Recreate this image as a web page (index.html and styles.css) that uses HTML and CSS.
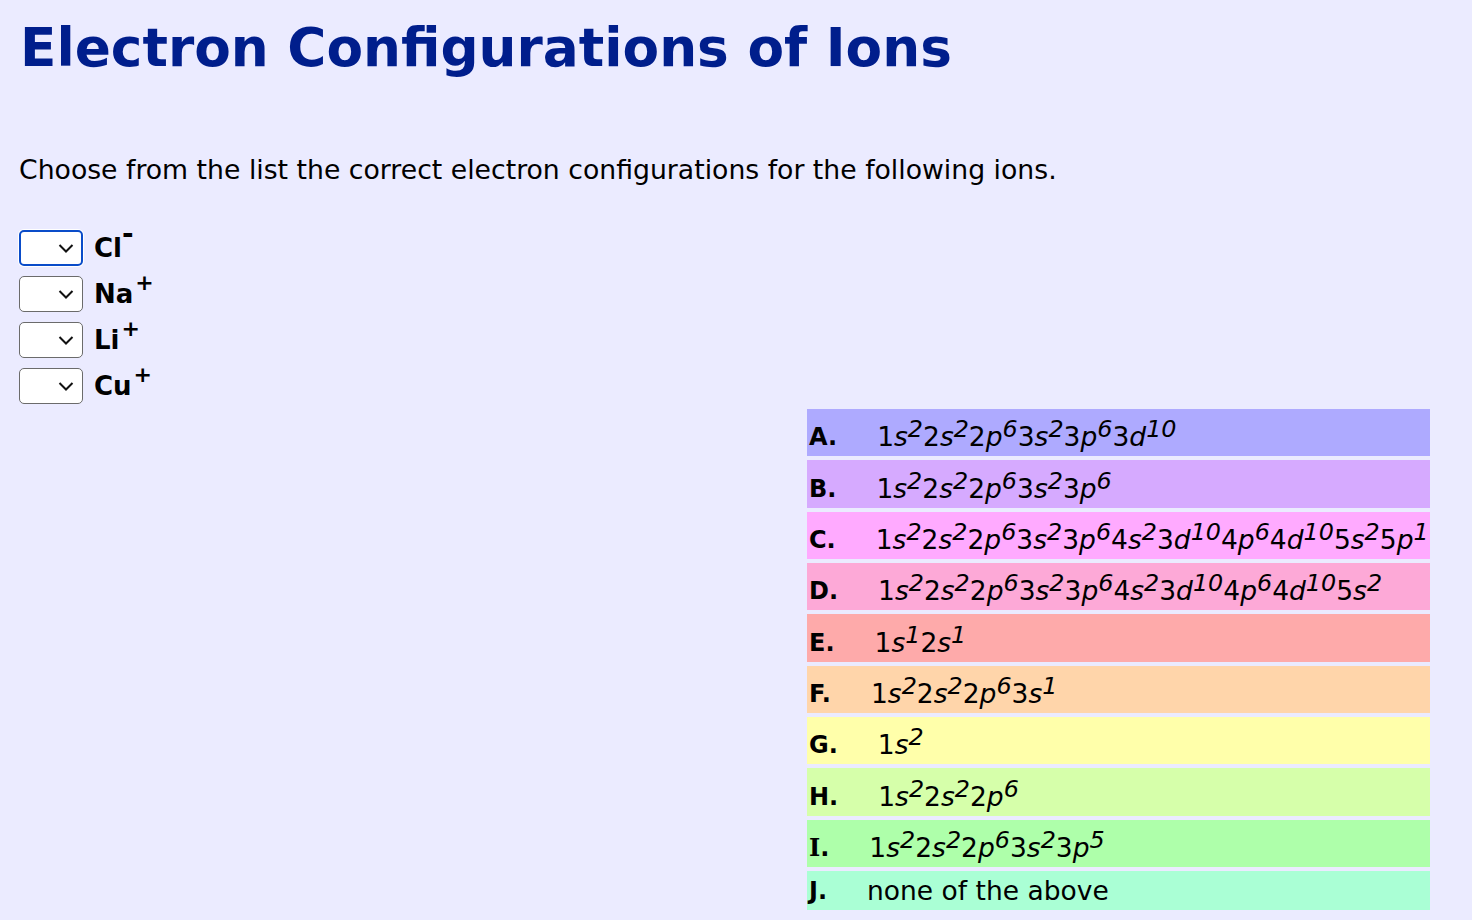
FILE: index.html
```html
<!DOCTYPE html>
<html lang="en">
<head>
<meta charset="utf-8">
<title>Electron Configurations of Ions</title>
<link rel="stylesheet" href="styles.css">
</head>
<body>
<h1 class="title">Electron Configurations of Ions</h1>
<p class="intro">Choose from the list the correct electron configurations for the following ions.</p>

<div class="questions">
  <div class="q">
    <span class="sel-wrap"><select class="sel focused"><option></option><option>A</option><option>B</option><option>C</option><option>D</option><option>E</option><option>F</option><option>G</option><option>H</option><option>I</option><option>J</option></select><svg class="chev" width="16" height="11" viewBox="0 0 16 11"><polyline points="1.5,2 8,8.5 14.5,2" fill="none" stroke="#111" stroke-width="2"/></svg></span>
    <span class="ion">Cl<sup class="minus">-</sup></span>
  </div>
  <div class="q">
    <span class="sel-wrap"><select class="sel"><option></option><option>A</option><option>B</option><option>C</option><option>D</option><option>E</option><option>F</option><option>G</option><option>H</option><option>I</option><option>J</option></select><svg class="chev" width="16" height="11" viewBox="0 0 16 11"><polyline points="1.5,2 8,8.5 14.5,2" fill="none" stroke="#111" stroke-width="2"/></svg></span>
    <span class="ion">Na<sup class="plus">+</sup></span>
  </div>
  <div class="q">
    <span class="sel-wrap"><select class="sel"><option></option><option>A</option><option>B</option><option>C</option><option>D</option><option>E</option><option>F</option><option>G</option><option>H</option><option>I</option><option>J</option></select><svg class="chev" width="16" height="11" viewBox="0 0 16 11"><polyline points="1.5,2 8,8.5 14.5,2" fill="none" stroke="#111" stroke-width="2"/></svg></span>
    <span class="ion">Li<sup class="plus">+</sup></span>
  </div>
  <div class="q">
    <span class="sel-wrap"><select class="sel"><option></option><option>A</option><option>B</option><option>C</option><option>D</option><option>E</option><option>F</option><option>G</option><option>H</option><option>I</option><option>J</option></select><svg class="chev" width="16" height="11" viewBox="0 0 16 11"><polyline points="1.5,2 8,8.5 14.5,2" fill="none" stroke="#111" stroke-width="2"/></svg></span>
    <span class="ion">Cu<sup class="plus">+</sup></span>
  </div>
</div>

<div class="choices-wrap">
  <div class="choices">
    <div class="row c-a"><b class="letter">A.</b><span class="cfg">1<i>s<sup>2</sup></i>2<i>s<sup>2</sup></i>2<i>p<sup>6</sup></i>3<i>s<sup>2</sup></i>3<i>p<sup>6</sup></i>3<i>d<sup>10</sup></i></span></div>
    <div class="row c-b"><b class="letter">B.</b><span class="cfg">1<i>s<sup>2</sup></i>2<i>s<sup>2</sup></i>2<i>p<sup>6</sup></i>3<i>s<sup>2</sup></i>3<i>p<sup>6</sup></i></span></div>
    <div class="row c-c"><b class="letter">C.</b><span class="cfg">1<i>s<sup>2</sup></i>2<i>s<sup>2</sup></i>2<i>p<sup>6</sup></i>3<i>s<sup>2</sup></i>3<i>p<sup>6</sup></i>4<i>s<sup>2</sup></i>3<i>d<sup>10</sup></i>4<i>p<sup>6</sup></i>4<i>d<sup>10</sup></i>5<i>s<sup>2</sup></i>5<i>p<sup>1</sup></i></span></div>
    <div class="row c-d"><b class="letter">D.</b><span class="cfg">1<i>s<sup>2</sup></i>2<i>s<sup>2</sup></i>2<i>p<sup>6</sup></i>3<i>s<sup>2</sup></i>3<i>p<sup>6</sup></i>4<i>s<sup>2</sup></i>3<i>d<sup>10</sup></i>4<i>p<sup>6</sup></i>4<i>d<sup>10</sup></i>5<i>s<sup>2</sup></i></span></div>
    <div class="row c-e"><b class="letter">E.</b><span class="cfg">1<i>s<sup>1</sup></i>2<i>s<sup>1</sup></i></span></div>
    <div class="row c-f"><b class="letter">F.</b><span class="cfg">1<i>s<sup>2</sup></i>2<i>s<sup>2</sup></i>2<i>p<sup>6</sup></i>3<i>s<sup>1</sup></i></span></div>
    <div class="row c-g"><b class="letter">G.</b><span class="cfg">1<i>s<sup>2</sup></i></span></div>
    <div class="row c-h"><b class="letter">H.</b><span class="cfg">1<i>s<sup>2</sup></i>2<i>s<sup>2</sup></i>2<i>p<sup>6</sup></i></span></div>
    <div class="row c-i"><b class="letter"><span class="slab">I</span>.</b><span class="cfg">1<i>s<sup>2</sup></i>2<i>s<sup>2</sup></i>2<i>p<sup>6</sup></i>3<i>s<sup>2</sup></i>3<i>p<sup>5</sup></i></span></div>
    <div class="row c-j last"><b class="letter">J.</b><span class="plain">none of the above</span></div>
  </div>
</div>
</body>
</html>
```

FILE: styles.css
```css
html, body {
  margin: 0;
  padding: 0;
}

body {
  background: #EBEBFF;
  font-family: "DejaVu Sans", Verdana, sans-serif;
  color: #000;
  padding: 17px 0 0 19px;
}

.title {
  margin: 0;
  font-size: 53.3px;
  line-height: 62px;
  font-weight: bold;
  color: #001E8C;
  padding-left: 1px;
}

.intro {
  margin: 75px 0 0;
  font-size: 26.7px;
  line-height: 31px;
}

.questions {
  margin-top: 45px;
  display: flex;
  flex-direction: column;
  gap: 10px;
}

.q {
  display: flex;
  align-items: center;
  gap: 11px;
  height: 36px;
}

.sel-wrap {
  position: relative;
  display: inline-block;
  width: 64px;
  height: 36px;
}

.sel {
  appearance: none;
  -webkit-appearance: none;
  width: 64px;
  height: 36px;
  box-sizing: border-box;
  border: 1px solid #6b6b6b;
  border-radius: 5px;
  background: #fff;
  margin: 0;
  padding: 0 6px;
  font: 16px "DejaVu Sans", sans-serif;
}

.sel.focused {
  border: 2px solid #0A4CC9;
  box-shadow: 0 0 0 1px #ffffff;
}

.chev {
  position: absolute;
  left: 39px;
  top: 13px;
  pointer-events: none;
}

.ion {
  font-size: 26px;
  font-weight: bold;
  line-height: 30px;
}

.ion sup {
  vertical-align: 0;
  position: relative;
  line-height: 0;
}

.ion .plus {
  font-weight: bold;
  font-size: 22px;
  top: -13px;
  margin-left: 2px;
}

.ion .minus {
  font-size: 28px;
  font-weight: 900;
  top: -14px;
  margin-left: 0;
}

.choices-wrap {
  display: flex;
  justify-content: flex-end;
  padding-right: 42px;
  margin-top: 5px;
}

.choices {
  width: 623px;
  display: flex;
  flex-direction: column;
  gap: 4px;
}

.row {
  height: 47.33px;
  box-sizing: border-box;
  display: flex;
  align-items: flex-end;
  padding: 0 2px 4px;
  line-height: 30px;
}

.row.last {
  height: 39px;
}

.letter {
  font-size: 24px;
  font-weight: bold;
  margin-right: 40px;
}

.slab {
  font-family: "DejaVu Serif", serif;
}

.cfg {
  font-size: 26.5px;
  font-style: normal;
}

.cfg i {
  font-style: italic;
}

.cfg sup {
  font-size: 0.9em;
  vertical-align: 0.37em;
  line-height: 0;
}

.plain {
  font-size: 26.5px;
}

.c-a { background: #AEAAFF; }
.c-b { background: #D6AAFF; }
.c-c { background: #FFAAFF; }
.c-d { background: #FDA9D7; }
.c-e { background: #FEAAAA; }
.c-f { background: #FFD5AA; }
.c-g { background: #FFFFAA; }
.c-h { background: #D6FFAA; }
.c-i { background: #AEFFAA; }
.c-j { background: #AAFFD5; }
```
